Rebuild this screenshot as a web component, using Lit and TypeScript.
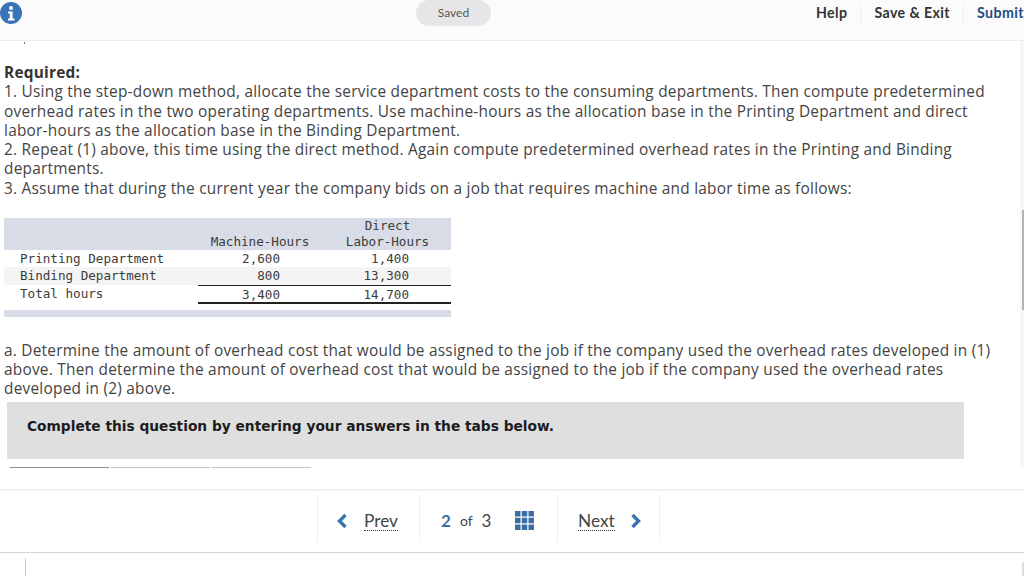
import { LitElement, css, html } from 'lit'
import { customElement } from 'lit/decorators.js'

const rows = [
  { name: 'Printing Department', machine: '2,600', labor: '1,400', cls: '' },
  { name: 'Binding Department', machine: '800', labor: '13,300', cls: 'shade' },
  { name: 'Total hours', machine: '3,400', labor: '14,700', cls: 'total' },
]

@customElement('app-root')
export class AppRoot extends LitElement {
  static styles = css`
    :host {
      display: flex;
      flex-direction: column;
      width: 1024px;
      height: 576px;
      overflow: hidden;
      background: #fff;
      font-family: Lato, sans-serif;
      color: #333;
    }
    .top {
      flex: none;
      height: 41px;
      box-sizing: border-box;
      display: grid;
      grid-template-columns: 416px 75px 533px;
      align-items: start;
      background: #fbfbfb;
      border-bottom: 1px solid #ececec;
    }
    .info {
      width: 22px;
      height: 22px;
      margin-top: 2px;
      display: block;
    }
    .saved {
      height: 26px;
      border-radius: 13px;
      background: #e6e6e8;
      color: #555;
      font-size: 12px;
      line-height: 25px;
      text-align: center;
    }
    .links {
      display: flex;
      justify-content: flex-end;
      padding-top: 4px;
      font-size: 14.2px;
      font-weight: 700;
      letter-spacing: 0.4px;
      color: #333;
      white-space: nowrap;
      overflow: hidden;
    }
    .links span {
      height: 20px;
      line-height: 18px;
      padding: 0 13px;
      border-left: 1px solid #eee;
    }
    .links span:first-child {
      border-left: 0;
    }
    .links .submit {
      color: #1f4e86;
      padding-right: 0;
      width: 47px;
    }
    .middle {
      flex: none;
      height: 426px;
      display: flex;
    }
    .content {
      flex: 1;
      min-width: 0;
      padding: 1px 0 0 4px;
      font-family: 'Open Sans', sans-serif;
      font-size: 15.4px;
      line-height: 19.3px;
      letter-spacing: 0.24px;
      color: #444;
    }
    .tick {
      width: 1px;
      height: 2px;
      margin: 0 0 19px 20px;
      background: #777;
    }
    .content p {
      margin: 0;
      width: 1010px;
      white-space: nowrap;
    }
    .content .req {
      font-weight: 700;
      color: #333;
    }
    .scroll {
      flex: none;
      width: 4px;
      background: #f6f6f6;
      padding: 169px 0 0 2px;
      box-sizing: border-box;
    }
    .thumb {
      height: 100px;
      background: #b4b4b4;
    }
    .data {
      width: 447px;
      margin: 20px 0 0 0;
      font-family: 'DejaVu Sans Mono', monospace;
      font-size: 12.6px;
      line-height: 17.3px;
      letter-spacing: 0;
      color: #3c3c3c;
      display: grid;
      grid-template-columns: 194px 112px 141px;
    }
    .data .head {
      background: #d7dce6;
      height: 32px;
      line-height: 16px;
      display: flex;
      flex-direction: column;
      justify-content: flex-end;
      text-align: center;
      white-space: nowrap;
      padding-left: 14px;
    }
    .data .head.mh {
      padding-left: 12px;
    }
    .data .cell {
      height: 17.4px;
      box-sizing: border-box;
    }
    .data .name {
      padding-left: 16px;
    }
    .data .num {
      text-align: right;
      padding-right: 30px;
    }
    .data .num.last {
      padding-right: 42px;
    }
    .data .shade {
      background: #f4f4f4;
    }
    .data .total {
      height: 19px;
    }
    .data .total.num {
      border-top: 1px solid #222;
      border-bottom: 2px solid #222;
    }
    .data .foot {
      grid-column: 1 / 4;
      height: 7px;
      background: #d7dce6;
      margin-top: 6px;
    }
    .content .part {
      margin-top: 24px;
    }
    .notice {
      width: 957px;
      height: 57px;
      box-sizing: border-box;
      margin: 3px 0 0 3px;
      padding: 14px 20px;
      background: #dfdfdf;
      font-family: 'DejaVu Sans', sans-serif;
      font-size: 13.75px;
      line-height: 20px;
      font-weight: 700;
      letter-spacing: 0;
      color: #1c1c1c;
    }
    .tabs {
      display: flex;
      gap: 2px;
      margin: 8px 0 0 6px;
    }
    .tabs i {
      display: block;
      width: 99px;
      height: 1px;
      background: #c4c4c4;
    }
    .tabs i:first-child {
      background: #8c8c8c;
    }
    .bottom {
      flex: none;
      height: 64px;
      box-sizing: border-box;
      margin-top: 22px;
      border-top: 2px solid #f2f2f2;
      border-bottom: 1px solid #d4d4d4;
      padding: 4px 0 0 317px;
      display: flex;
    }
    .pager {
      display: flex;
      height: 47px;
      color: #444;
    }
    .pager > div {
      display: flex;
      align-items: center;
      box-sizing: border-box;
      border-left: 1px solid #efefef;
      padding-top: 4px;
    }
    .prev {
      width: 102px;
      padding-left: 18px;
      gap: 16px;
    }
    .count {
      width: 138px;
      padding-left: 21px;
      font-size: 15px;
    }
    .next {
      width: 103px;
      padding-left: 20px;
      gap: 15px;
      border-right: 1px solid #efefef;
    }
    .link {
      font-size: 17.3px;
      line-height: 19px;
      border-bottom: 1px dotted #333;
    }
    .chev {
      width: 12px;
      height: 16px;
      display: block;
    }
    .cur {
      font-weight: 700;
      font-size: 17px;
      color: #3a6ea5;
    }
    .of {
      font-size: 14px;
      margin: 0 9px 0 9px;
    }
    .num3 {
      font-size: 17px;
    }
    .grid {
      display: block;
      width: 19px;
      height: 19px;
      margin-left: 24px;
    }
    .strip {
      flex: 1;
      padding: 5px 0 0 25px;
      display: flex;
      justify-content: space-between;
    }
    .strip i {
      display: block;
      width: 1px;
      background: #c8c8c8;
    }
    .strip b {
      display: block;
      width: 2px;
      margin-top: 4px;
      background: #ddd;
    }
  `

  render() {
    return html`
      <div class="top">
        <svg class="info" viewBox="0 0 22 22">
          <circle cx="11" cy="11" r="11" fill="#3a74b8"></circle>
          <circle cx="11" cy="6" r="2" fill="#fff"></circle>
          <path d="M8 9.500h4.600v7h1.900v2H8v-2h1.800v-5H8z" fill="#fff"></path>
        </svg>
        <div class="saved">Saved</div>
        <div class="links">
          <span>Help</span><span>Save &amp; Exit</span><span class="submit">Submit</span>
        </div>
      </div>
      <div class="middle">
        <div class="content">
          <div class="tick"></div>
          <p class="req">Required:</p>
          <p>1. Using the step-down method, allocate the service department costs to the consuming departments. Then compute predetermined<br />overhead rates in the two operating departments. Use machine-hours as the allocation base in the Printing Department and direct<br />labor-hours as the allocation base in the Binding Department.</p>
          <p>2. Repeat (1) above, this time using the direct method. Again compute predetermined overhead rates in the Printing and Binding<br />departments.</p>
          <p>3. Assume that during the current year the company bids on a job that requires machine and labor time as follows:</p>
          <div class="data">
            <div class="head"></div>
            <div class="head mh">Machine-Hours</div>
            <div class="head">Direct<br />Labor-Hours</div>
            ${rows.map(
              (r) => html`
                <div class="cell name ${r.cls}">${r.name}</div>
                <div class="cell num ${r.cls}">${r.machine}</div>
                <div class="cell num last ${r.cls}">${r.labor}</div>
              `,
            )}
            <div class="foot"></div>
          </div>
          <p class="part">a. Determine the amount of overhead cost that would be assigned to the job if the company used the overhead rates developed in (1)<br />above. Then determine the amount of overhead cost that would be assigned to the job if the company used the overhead rates<br />developed in (2) above.</p>
          <div class="notice">Complete this question by entering your answers in the tabs below.</div>
          <div class="tabs"><i></i><i></i><i></i></div>
        </div>
        <div class="scroll"><div class="thumb"></div></div>
      </div>
      <div class="bottom">
        <div class="pager">
          <div class="prev">
            <svg class="chev" viewBox="0 0 12 16"><path d="M9.500 2 3.500 8l6 6" fill="none" stroke="#3a74b0" stroke-width="3.400"></path></svg>
            <span class="link">Prev</span>
          </div>
          <div class="count">
            <span class="cur">2</span><span class="of">of</span><span class="num3">3</span>
            <svg class="grid" viewBox="0 0 19 19" fill="#3a6ea5">
              <rect x="0" y="0" width="5.500" height="5.500"></rect><rect x="6.750" y="0" width="5.500" height="5.500"></rect><rect x="13.500" y="0" width="5.500" height="5.500"></rect>
              <rect x="0" y="6.750" width="5.500" height="5.500"></rect><rect x="6.750" y="6.750" width="5.500" height="5.500"></rect><rect x="13.500" y="6.750" width="5.500" height="5.500"></rect>
              <rect x="0" y="13.500" width="5.500" height="5.500"></rect><rect x="6.750" y="13.500" width="5.500" height="5.500"></rect><rect x="13.500" y="13.500" width="5.500" height="5.500"></rect>
            </svg>
          </div>
          <div class="next">
            <span class="link">Next</span>
            <svg class="chev" viewBox="0 0 12 16"><path d="M2.500 2l6 6-6 6" fill="none" stroke="#3a74b0" stroke-width="3.400"></path></svg>
          </div>
        </div>
      </div>
      <div class="strip"><i></i><b></b></div>
    `
  }
}
